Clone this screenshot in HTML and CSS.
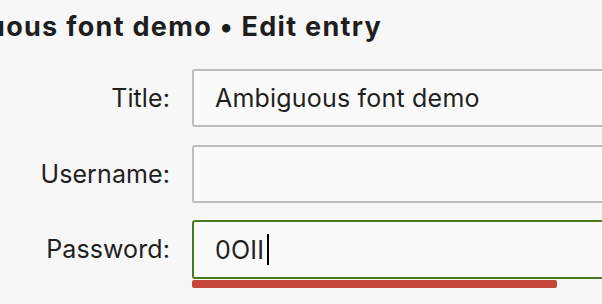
FILE: index.html
```html
<!DOCTYPE html>
<html>
<head>
<meta charset="utf-8">
<link rel="stylesheet" href="styles.css">
</head>
<body>
<div class="page">
  <div class="header">
    <h1 class="heading">Ambiguous font demo • Edit entry</h1>
  </div>
  <div class="form">
    <label class="label">Title:</label>
    <div class="field"><span class="value">Ambiguous font demo</span></div>
    <label class="label">Username:</label>
    <div class="field"></div>
    <label class="label">Password:</label>
    <div class="pw-cell">
      <div class="field field-focus"><span class="value">0OII</span><span class="caret"></span></div>
      <div class="strength"></div>
    </div>
  </div>
</div>
</body>
</html>
```
FILE: styles.css
```css
html, body {
  margin: 0;
  padding: 0;
  background: #f7f7f7;
  overflow: hidden;
}
.page {
  width: 602px;
  height: 304px;
  overflow: hidden;
  font-family: Inter, "Noto Sans", sans-serif;
  color: #1f1f1f;
}
.header {
  width: 382px;
  height: 43px;
  display: flex;
  justify-content: flex-end;
  padding-top: 11px;
  box-sizing: border-box;
}
.heading {
  margin: 0;
  font-size: 27px;
  line-height: 32px;
  font-weight: 700;
  letter-spacing: 1.3px;
  white-space: nowrap;
  flex-shrink: 0;
  color: #1e1e1e;
}
.form {
  margin-top: 26px;
  display: grid;
  grid-template-columns: 170px 520px;
  column-gap: 22px;
  row-gap: 17.5px;
  align-items: start;
}
.label {
  height: 58px;
  display: flex;
  align-items: center;
  justify-content: flex-end;
  font-size: 25px;
  letter-spacing: 0.1px;
  color: #1f1f1f;
}
.field {
  box-sizing: border-box;
  height: 58px;
  border: 2px solid #bdbdbd;
  border-radius: 3px;
  background: #fafafa;
  display: flex;
  align-items: center;
  padding-left: 21px;
  font-size: 25px;
  letter-spacing: 0.2px;
}
.field-focus {
  border-color: #4b7b1f;
  height: 59px;
}
.value {
  color: #1f1f1f;
}
.caret {
  width: 2px;
  height: 31px;
  background: #000;
  margin-left: 3px;
}
.strength {
  width: 365px;
  height: 7.5px;
  margin-top: 1px;
  background: #c6463a;
  border-radius: 2px;
}
```
